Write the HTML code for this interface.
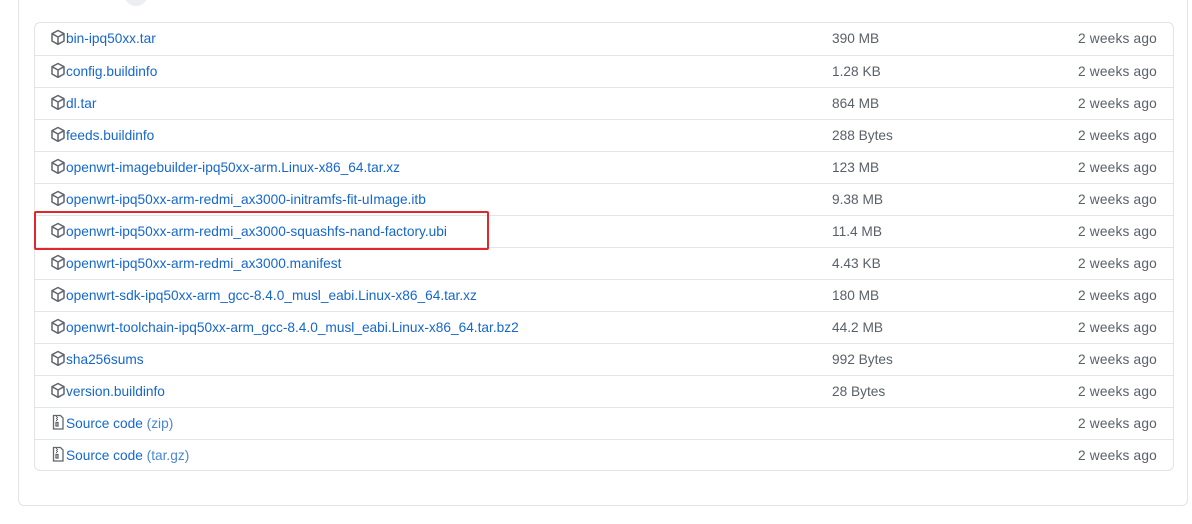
<!DOCTYPE html>
<html><head><meta charset="utf-8"><style>
body{margin:0;width:1192px;height:524px;background:#fff;font-family:"Liberation Sans",sans-serif;position:relative;overflow:hidden}
.outer{position:absolute;left:18px;top:-10px;width:1170px;height:516px;border:1px solid #e1e4e8;border-radius:6px;box-sizing:border-box}
.dot{position:absolute;left:124px;top:-18px;width:24px;height:24px;border-radius:50%;background:#eceef1}
.tbl{position:absolute;left:34px;top:22px;width:1140px;height:449px;border:1px solid #e1e4e8;border-radius:6px;box-sizing:border-box}
.row{position:absolute;left:0;width:1138px;height:32px;border-top:1px solid #e1e4e8;box-sizing:border-box}
.row:first-child{border-top:none}
.ic{position:absolute;left:15px;top:6px}
.name{position:absolute;left:31px;top:8px;font-size:13.7px;color:#1667c9;white-space:nowrap}
.name span{color:#4a86cf}
.size{position:absolute;left:797px;top:8px;font-size:13.7px;color:#586069}
.date{position:absolute;right:16px;top:8px;font-size:13.7px;color:#586069;letter-spacing:0.2px}
.red{position:absolute;left:34px;top:211px;width:455px;height:39px;border:2px solid #e2272b;box-sizing:border-box;border-radius:2px}
</style></head><body>
<div class="dot"></div>
<div class="outer"></div>
<div class="tbl" id="t"></div>
<div class="red"></div>
<script>
var pkg='<svg class="ic" width="16" height="17" viewBox="0 0 16 17"><path fill="none" stroke="#5f666d" stroke-width="1.5" stroke-linejoin="round" d="M8 1.5l6 3.2v7.3l-6 3.3-6-3.3v-7.3z M2 4.7l6 3.3 6-3.3 M8 8v7.3"/></svg>';
var zip='<svg class="ic" width="16" height="17" viewBox="0 0 16 17"><path fill="none" stroke="#5f666d" stroke-width="1.3" d="M3.5 1.5h7l2.5 2.5v11h-9.5z M6 2.5h1 M7 3.5h1 M6 4.5h1 M7 5.5h1 M6 6.5h1 M6 8.5h2v3.5h-2z"/></svg>';
var rows=[["bin-ipq50xx.tar","390 MB"],["config.buildinfo","1.28 KB"],["dl.tar","864 MB"],["feeds.buildinfo","288 Bytes"],["openwrt-imagebuilder-ipq50xx-arm.Linux-x86_64.tar.xz","123 MB"],["openwrt-ipq50xx-arm-redmi_ax3000-initramfs-fit-uImage.itb","9.38 MB"],["openwrt-ipq50xx-arm-redmi_ax3000-squashfs-nand-factory.ubi","11.4 MB"],["openwrt-ipq50xx-arm-redmi_ax3000.manifest","4.43 KB"],["openwrt-sdk-ipq50xx-arm_gcc-8.4.0_musl_eabi.Linux-x86_64.tar.xz","180 MB"],["openwrt-toolchain-ipq50xx-arm_gcc-8.4.0_musl_eabi.Linux-x86_64.tar.bz2","44.2 MB"],["sha256sums","992 Bytes"],["version.buildinfo","28 Bytes"],["Source code <span>(zip)</span>",""],["Source code <span>(tar.gz)</span>",""]];
var h='';rows.forEach(function(r,i){h+='<div class="row" style="top:'+(i*32)+'px">'+(r[1]?pkg:zip)+'<div class="name">'+r[0]+'</div><div class="size">'+r[1]+'</div><div class="date">2 weeks ago</div></div>';});
document.getElementById('t').innerHTML=h;
</script>
</body></html>
